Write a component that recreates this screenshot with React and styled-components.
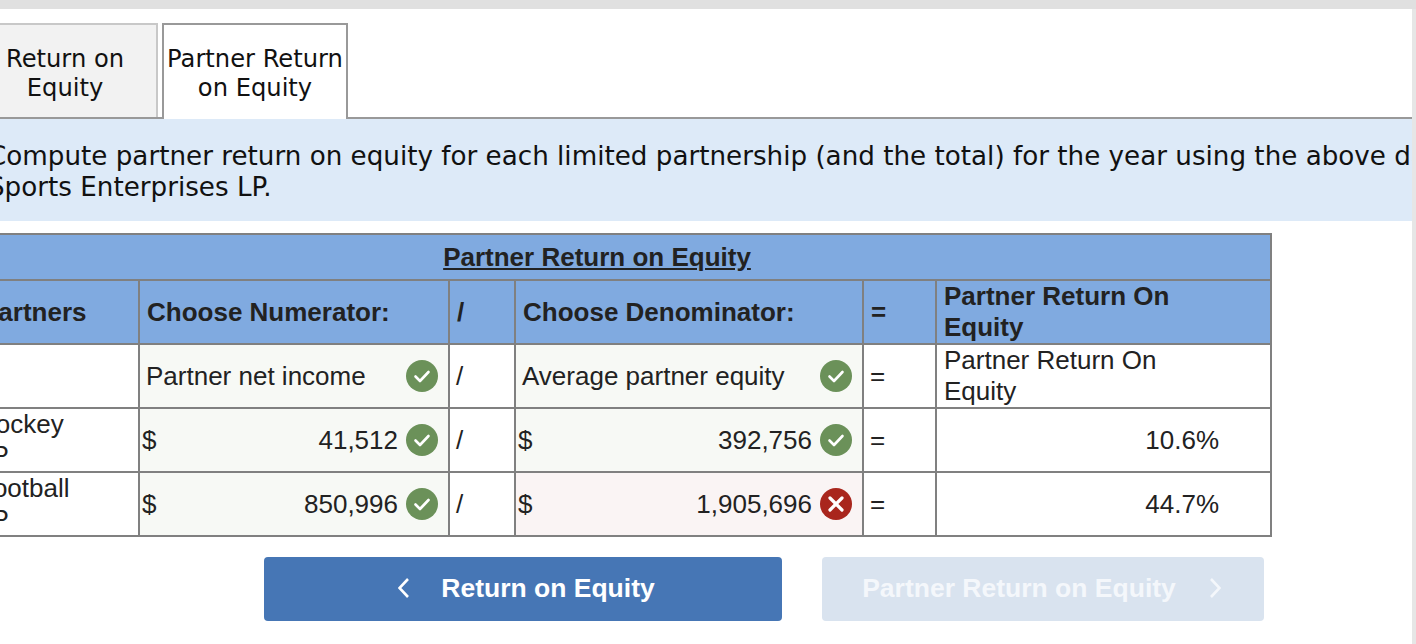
import React from "react";
import styled, { createGlobalStyle } from "styled-components";

const Global = createGlobalStyle`
  html, body { margin: 0; padding: 0; background: #fff; }
  body { width: 1416px; height: 644px; overflow: hidden; }
`;

const Page = styled.div`
  width: 1416px;
  height: 644px;
  overflow: hidden;
  display: flex;
  flex-direction: column;
`;
const TopBar = styled.div`
  height: 9px;
  background: #e0e0e0;
  flex: none;
`;
const Body = styled.div`
  flex: 1;
  display: flex;
  min-height: 0;
`;
const Content = styled.div`
  width: 1412px;
  flex: none;
  overflow: hidden;
  display: flex;
  flex-direction: column;
`;
const ScrollEdge = styled.div`
  width: 4px;
  flex: none;
  background: #e6e6e6;
`;
const TabBar = styled.div`
  display: flex;
  gap: 4px;
  margin: 14px 0 0 -28px;
  height: 96px;
  box-sizing: border-box;
  border-bottom: 2px solid #999;
  flex: none;
`;
const Tab = styled.div`
  box-sizing: border-box;
  height: ${(p) => (p.$active ? "96px" : "94px")};
  width: ${(p) => p.$w}px;
  flex: none;
  border: 2px solid ${(p) => (p.$active ? "#999" : "#c8c8c8")};
  border-bottom: none;
  background: ${(p) => (p.$active ? "#fff" : "#f2f2f2")};
  color: #111;
  font: 24.2px/29px "DejaVu Sans", sans-serif;
  text-align: center;
  padding-top: 20px;
  white-space: pre;
  position: relative;
  z-index: 1;
`;
const Info = styled.div`
  flex: none;
  height: 102px;
  box-sizing: border-box;
  margin-left: -12px;
  padding-top: 22px;
  background: #ddeaf8;
  color: #111;
  font: 26.2px/31px "DejaVu Sans", sans-serif;
  white-space: nowrap;
  overflow: hidden;
`;
const Table = styled.table`
  flex: none;
  margin: 12px 0 0 -28px;
  width: 1297px;
  table-layout: fixed;
  border-collapse: collapse;
  font: 26px/31px "Liberation Sans", Arial, sans-serif;
  color: #222;
`;
const Cell = styled.td`
  border: 2px solid #808080;
  padding: 0 ${(p) => p.$pad ?? 6}px;
  height: 64px;
  box-sizing: border-box;
  overflow: hidden;
  background: ${(p) => (p.$tone === "ok" ? "#f7f9f5" : p.$tone === "bad" ? "#faf4f4" : "#fff")};
`;
const Head = styled.th`
  border: 2px solid #808080;
  padding: 0 7px;
  height: 64px;
  box-sizing: border-box;
  background: #80aae0;
  text-align: left;
  font-weight: 700;
`;
const Title = styled(Head)`
  height: 46px;
  padding-right: 57px;
  text-align: center;
  text-decoration: underline;
`;
const Amount = styled.div`
  display: flex;
  align-items: center;
  height: 100%;
`;
const Money = styled.span`
  margin-left: -4px;
`;
const Value = styled.span`
  flex: 1;
  text-align: right;
  margin-right: 8px;
`;
const Label = styled.span`
  flex: 1;
`;
const Wrapped = styled.div`
  max-width: 260px;
`;
const Percent = styled.div`
  text-align: right;
  padding-right: 45px;
`;
const Badge = styled.span`
  flex: none;
  width: 32px;
  height: 32px;
  border-radius: 50%;
  background: ${(p) => (p.$bad ? "#a9261d" : "#6b9159")};
  display: inline-flex;
  align-items: center;
  justify-content: center;
  margin-right: 4px;
`;
const Nav = styled.div`
  display: flex;
  margin: 20px 0 0 264px;
  gap: 40px;
`;
const NavButton = styled.div`
  box-sizing: border-box;
  height: 64px;
  width: ${(p) => p.$w}px;
  padding: 0 ${(p) => p.$pr || 0}px 2px ${(p) => p.$pl || 0}px;
  border-radius: 4px;
  background: ${(p) => (p.$off ? "#d9e3ef" : "#4676b5")};
  color: ${(p) => (p.$off ? "#f4f7fb" : "#fff")};
  font: 700 26.5px "Liberation Sans", Arial, sans-serif;
  display: flex;
  align-items: center;
  justify-content: center;
  gap: ${(p) => p.$gap}px;
`;

const Mark = ({ bad }) => (
  <Badge $bad={bad}>
    <svg width="20" height="20" viewBox="0 0 20 20" fill="none" stroke="#fff" strokeLinecap="round" strokeLinejoin="round">
      {bad ? (
        <path d="M4 4 L16 16 M16 4 L4 16" strokeWidth="3.2" />
      ) : (
        <path d="M3.5 10.5 L8 15 L16.5 6" strokeWidth="2.6" />
      )}
    </svg>
  </Badge>
);

const Chevron = ({ right }) => (
  <svg width="12" height="20" viewBox="0 0 12 20" fill="none" stroke={right ? "#f4f7fb" : "#fff"} strokeWidth="2.6">
    <path d={right ? "M2 1 L10.5 10 L2 19" : "M10 1 L1.5 10 L10 19"} />
  </svg>
);

const rows = [
  { name: "Hockey\nLP", num: "41,512", den: "392,756", res: "10.6%", ok: true },
  { name: "Football\nLP", num: "850,996", den: "1,905,696", res: "44.7%", ok: false },
];

const NameText = styled.div`
  white-space: pre-line;
`;

export default function App() {
  return (
    <Page>
      <Global />
      <TopBar />
      <Body>
        <Content>
          <TabBar>
            <Tab $w={186}>{"Return on\nEquity"}</Tab>
            <Tab $w={186} $active>{"Partner Return\non Equity"}</Tab>
          </TabBar>
          <Info>
            Compute partner return on equity for each limited partnership (and the total) for the year using the above data for
            <br />
            Sports Enterprises LP.
          </Info>
          <Table>
            <colgroup>
              <col width="166" />
              <col width="310" />
              <col width="66" />
              <col width="348" />
              <col width="73" />
              <col width="335" />
            </colgroup>
            <thead>
              <tr>
                <Title colSpan={6}>Partner Return on Equity</Title>
              </tr>
              <tr>
                <Head>Partners</Head>
                <Head>Choose Numerator:</Head>
                <Head>/</Head>
                <Head>Choose Denominator:</Head>
                <Head>=</Head>
                <Head>
                  <Wrapped>Partner Return On Equity</Wrapped>
                </Head>
              </tr>
            </thead>
            <tbody>
              <tr>
                <Cell />
                <Cell $tone="ok">
                  <Amount>
                    <Label>Partner net income</Label>
                    <Mark />
                  </Amount>
                </Cell>
                <Cell>/</Cell>
                <Cell $tone="ok">
                  <Amount>
                    <Label>Average partner equity</Label>
                    <Mark />
                  </Amount>
                </Cell>
                <Cell>=</Cell>
                <Cell $pad={7}>
                  <Wrapped>Partner Return On Equity</Wrapped>
                </Cell>
              </tr>
              {rows.map((r) => (
                <tr key={r.name}>
                  <Cell $pad={3}>
                    <NameText>{r.name}</NameText>
                  </Cell>
                  <Cell $tone="ok">
                    <Amount>
                      <Money>$</Money>
                      <Value>{r.num}</Value>
                      <Mark />
                    </Amount>
                  </Cell>
                  <Cell>/</Cell>
                  <Cell $tone={r.ok ? "ok" : "bad"}>
                    <Amount>
                      <Money>$</Money>
                      <Value>{r.den}</Value>
                      <Mark bad={!r.ok} />
                    </Amount>
                  </Cell>
                  <Cell>=</Cell>
                  <Cell>
                    <Percent>{r.res}</Percent>
                  </Cell>
                </tr>
              ))}
            </tbody>
          </Table>
          <Nav>
            <NavButton $w={518} $gap={31} $pl={7}>
              <Chevron />
              <span>Return on Equity</span>
            </NavButton>
            <NavButton $w={442} $gap={33} $pr={3} $off>
              <span>Partner Return on Equity</span>
              <Chevron right />
            </NavButton>
          </Nav>
        </Content>
        <ScrollEdge />
      </Body>
    </Page>
  );
}
